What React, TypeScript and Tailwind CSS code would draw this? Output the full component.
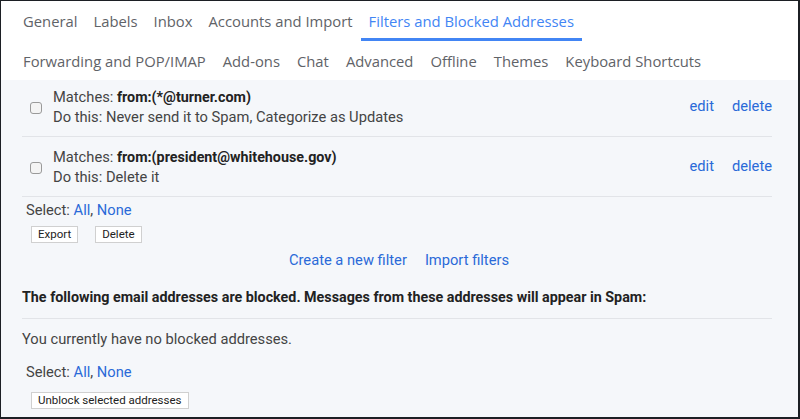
import React from "react";

const tabsRow1 = ["General", "Labels", "Inbox", "Accounts and Import", "Filters and Blocked Addresses"];
const tabsRow2 = ["Forwarding and POP/IMAP", "Add-ons", "Chat", "Advanced", "Offline", "Themes", "Keyboard Shortcuts"];

const filters = [
  { match: "from:(*@turner.com)", action: "Never send it to Spam, Categorize as Updates" },
  { match: "from:(president@whitehouse.gov)", action: "Delete it" },
];

function Checkbox() {
  return <span className="mt-[3px] block h-[12px] w-[12px] rounded-[3px] border border-[#9a9a9a] bg-[#f4f4f4]" />;
}

function SmallButton({ label }: { label: string }) {
  return (
    <button className="h-[17px] border border-[#d0d0d0] bg-white px-[6px] text-[11.5px] leading-[15px] text-[#222]">
      {label}
    </button>
  );
}

function SelectLine() {
  return (
    <div className="text-[14.7px] leading-[20px] text-[#444]">
      Select: <span className="text-[#2a6ad8]">All</span>, <span className="text-[#2a6ad8]">None</span>
    </div>
  );
}

export default function App() {
  return (
    <div
      className="h-[419px] w-[800px] overflow-hidden border-t border-l border-r-2 border-b-2 border-[#1c1f24] bg-[#f5f7fa]"
      style={{ fontFamily: "Roboto, 'Liberation Sans', sans-serif" }}
    >
      <div className="h-[79px] bg-white pl-[22px] text-[14.8px] text-[#5f6368]" style={{ fontFamily: "'Open Sans', Roboto, sans-serif" }}>
        <div className="flex h-[40px] gap-[16px]">
          {tabsRow1.map((t, i) => (
            <div
              key={t}
              className={
                i === 4
                  ? "-mx-[8px] flex items-center border-b-[3px] border-[#4285f4] px-[8px] pt-[3px] text-[#4285f4]"
                  : "flex items-center"
              }
            >
              {t}
            </div>
          ))}
        </div>
        <div className="flex h-[40px] items-center gap-[17px]">
          {tabsRow2.map((t) => (
            <div key={t}>{t}</div>
          ))}
        </div>
      </div>

      <div className="pl-[21px] pr-[26px]">
        {filters.map((f, i) => (
          <div
            key={f.match}
            className={
              (i === 0 ? "h-[57px] pb-[3px] " : "h-[60px] ") +
              "flex items-center border-b border-[#e2e4e8] pl-[8px] text-[14.7px] text-[#444]"
            }
          >
            <Checkbox />
            <div className="ml-[11px] flex-1 leading-[20px]">
              <div>
                Matches: <span className="text-[14.3px] font-bold text-[#222]">{f.match}</span>
              </div>
              <div>Do this: {f.action}</div>
            </div>
            <div className="flex gap-[18px] text-[#2a6ad8]">
              <span>edit</span>
              <span>delete</span>
            </div>
          </div>
        ))}

        <div className="pl-[4px] pt-[3px]">
          <SelectLine />
          <div className="mt-[6px] flex gap-[17px] pl-[5px]">
            <SmallButton label="Export" />
            <SmallButton label="Delete" />
          </div>
        </div>

        <div className="mt-[7px] flex justify-center gap-[18px] pl-[4px] text-[14.7px] leading-[20px] text-[#2a6ad8]">
          <span>Create a new filter</span>
          <span>Import filters</span>
        </div>

        <div className="mt-[17px] border-b border-[#e2e4e8] pb-[11px] text-[14.3px] font-bold leading-[20px] text-[#222]">
          The following email addresses are blocked. Messages from these addresses will appear in Spam:
        </div>
        <div className="pt-[10px] text-[14.7px] leading-[20px] text-[#444]">You currently have no blocked addresses.</div>

        <div className="pl-[4px] pt-[13px]">
          <SelectLine />
          <div className="mt-[5px] pl-[5px]">
            <SmallButton label="Unblock selected addresses" />
          </div>
        </div>
      </div>
    </div>
  );
}
